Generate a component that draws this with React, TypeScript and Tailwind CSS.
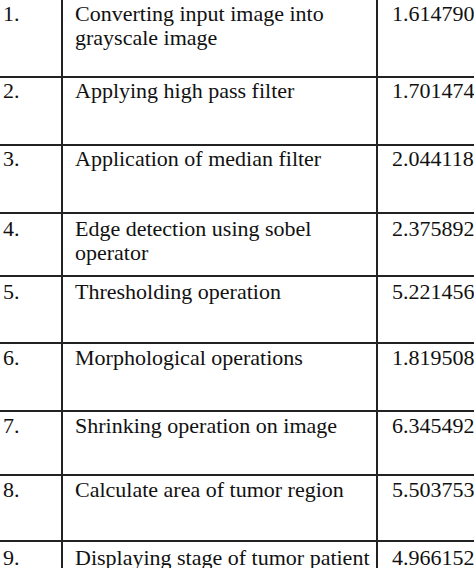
const rows = [
  { n: "1.", text: "Converting input image into grayscale image", value: "1.614790", h: "h-[78px]", pt: "pt-[2px]" },
  { n: "2.", text: "Applying high pass filter", value: "1.701474", h: "h-[68px]", pt: "pt-[1px]" },
  { n: "3.", text: "Application of median filter", value: "2.044118", h: "h-[68px]", pt: "pt-[1px]" },
  { n: "4.", text: "Edge detection using sobel operator", value: "2.375892", h: "h-[63px]", pt: "pt-[3px]" },
  { n: "5.", text: "Thresholding operation", value: "5.221456", h: "h-[67px]", pt: "pt-[3px]" },
  { n: "6.", text: "Morphological operations", value: "1.819508", h: "h-[68px]", pt: "pt-[2px]" },
  { n: "7.", text: "Shrinking operation on image", value: "6.345492", h: "h-[64px]", pt: "pt-[2px]" },
  { n: "8.", text: "Calculate area of tumor region", value: "5.503753", h: "h-[66px]", pt: "pt-[2px]" },
  { n: "9.", text: "Displaying stage of tumor patient", value: "4.966152", h: "h-[66px]", pt: "pt-[4px]" },
]

export default function App() {
  return (
    <div className="w-[474px] h-[568px] overflow-hidden bg-white text-[#111] font-['Liberation_Serif','Times_New_Roman',serif] text-[22px] leading-[24px]">
      {rows.map((r) => (
        <div key={r.n} className={`flex ${r.h} border-b-2 border-[#222] shrink-0`}>
          <div className={`w-[63px] shrink-0 border-r-2 border-[#222] pl-[3px] ${r.pt}`}>{r.n}</div>
          <div className={`w-[315px] shrink-0 border-r-2 border-[#222] pl-[12px] pr-1 ${r.pt}`}>{r.text}</div>
          <div className={`flex-1 whitespace-nowrap overflow-hidden pl-[14px] ${r.pt}`}>{r.value}</div>
        </div>
      ))}
    </div>
  )
}
